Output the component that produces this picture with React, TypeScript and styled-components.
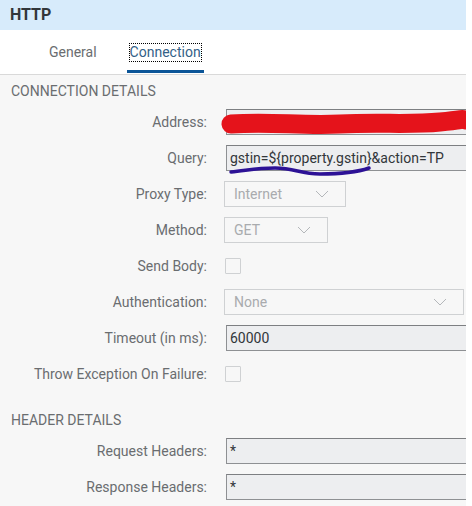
import styled, { createGlobalStyle } from 'styled-components';

const GlobalStyle = createGlobalStyle`
  html, body {
    margin: 0;
    padding: 0;
    background: #ffffff;
  }
  body {
    font-family: Roboto, 'Liberation Sans', sans-serif;
  }
`;

type Row =
  | { label: string; kind: 'input'; value: string }
  | { label: string; kind: 'select'; value: string; width: number }
  | { label: string; kind: 'check' };

const connectionRows: Row[] = [
  { label: 'Address', kind: 'input', value: '' },
  { label: 'Query', kind: 'input', value: 'gstin=${property.gstin}&action=TP' },
  { label: 'Proxy Type', kind: 'select', value: 'Internet', width: 122 },
  { label: 'Method', kind: 'select', value: 'GET', width: 104 },
  { label: 'Send Body', kind: 'check' },
  { label: 'Authentication', kind: 'select', value: 'None', width: 240 },
  { label: 'Timeout (in ms)', kind: 'input', value: '60000' },
  { label: 'Throw Exception On Failure', kind: 'check' },
];

const headerRows: Row[] = [
  { label: 'Request Headers', kind: 'input', value: '*' },
  { label: 'Response Headers', kind: 'input', value: '*' },
];

function Chevron() {
  return (
    <svg width="14" height="8" viewBox="0 0 14 8">
      <polyline points="1,1 7,7 13,1" fill="none" stroke="#b4b7ba" strokeWidth="1" />
    </svg>
  );
}

function FormRows({ rows }: { rows: Row[] }) {
  return (
    <Grid>
      {rows.map((row) => (
        <FieldRow key={row.label}>
          <Label>{row.label}:</Label>
          {row.kind === 'input' && <TextInput>{row.value}</TextInput>}
          {row.kind === 'select' && (
            <Select width={row.width}>
              <span>{row.value}</span>
              <Chevron />
            </Select>
          )}
          {row.kind === 'check' && <CheckBox />}
        </FieldRow>
      ))}
    </Grid>
  );
}

export default function App() {
  return (
    <>
      <GlobalStyle />
      <Panel>
        <TitleBar>HTTP</TitleBar>
        <TabBar>
          <Tab>General</Tab>
          <Tab active>
            <Focus>Connection</Focus>
          </Tab>
        </TabBar>
        <Content>
          <SectionTitle>CONNECTION DETAILS</SectionTitle>
          <FormRows rows={connectionRows} />
          <SectionTitle spaced>HEADER DETAILS</SectionTitle>
          <FormRows rows={headerRows} />
        </Content>
        <Scribbles width="472" height="506" viewBox="0 0 472 506">
          <path
            d="M231 124 C 270 121, 300 126, 340 124 S 410 125, 440 122 S 458 119, 466 120"
            fill="none"
            stroke="#e5131b"
            strokeWidth="19"
            strokeLinecap="round"
          />
          <path
            d="M231 172 C 245 171, 255 168, 275 168 S 300 174, 320 174 S 355 173, 369 168"
            fill="none"
            stroke="#2d1296"
            strokeWidth="3.5"
            strokeLinecap="round"
          />
        </Scribbles>
      </Panel>
    </>
  );
}

const Panel = styled.div`
  position: relative;
  width: 466px;
  height: 506px;
  overflow: hidden;
  background: #f7f7f7;
`;

const TitleBar = styled.div`
  height: 30px;
  line-height: 30px;
  padding-left: 10px;
  background: #d7ebfb;
  color: #32363a;
  font-size: 16px;
  font-weight: 700;
`;

const TabBar = styled.div`
  display: flex;
  align-items: flex-end;
  gap: 27px;
  height: 44px;
  padding-left: 46px;
  background: #ffffff;
  border-bottom: 1px solid #d9d9d9;
  box-sizing: content-box;
`;

const Tab = styled.div<{ active?: boolean }>`
  display: flex;
  align-items: center;
  box-sizing: border-box;
  height: 43px;
  margin-bottom: 1px;
  padding: 4px 3px 0;
  font-size: 14px;
  color: ${(p) => (p.active ? '#346187' : '#6a6d70')};
  border-bottom: 3px solid ${(p) => (p.active ? '#0b5598' : 'transparent')};
  border-radius: 2px 2px 0 0;
`;

const Focus = styled.span`
  outline: 1px dotted #000000;
  outline-offset: 0;
  line-height: 17px;
`;

const Content = styled.div`
  padding-top: 6px;
`;

const SectionTitle = styled.div<{ spaced?: boolean }>`
  height: 20px;
  line-height: 20px;
  padding-left: 11px;
  margin-top: ${(p) => (p.spaced ? '23px' : '0')};
  margin-bottom: 8px;
  color: #6a6d70;
  font-size: 14px;
`;

const Grid = styled.div`
  display: flex;
  flex-direction: column;
  gap: 10px;
`;

const FieldRow = styled.div`
  display: grid;
  grid-template-columns: 207px 1fr;
  column-gap: 17px;
  align-items: center;
  height: 26px;
`;

const Label = styled.div`
  text-align: right;
  color: #6a6d70;
  font-size: 14px;
  white-space: nowrap;
`;

const TextInput = styled.div`
  box-sizing: border-box;
  height: 26px;
  width: 260px;
  margin-left: 2px;
  padding: 0 3px;
  line-height: 24px;
  font-size: 14px;
  color: #32363a;
  background: #edeef0;
  border: 1px solid #8e9093;
  border-top-color: #7d7f82;
  white-space: nowrap;
  overflow: hidden;
`;

const Select = styled.div<{ width: number }>`
  box-sizing: border-box;
  display: flex;
  align-items: center;
  justify-content: space-between;
  width: ${(p) => p.width}px;
  height: 26px;
  padding: 0 16px 0 9px;
  font-size: 14px;
  color: #a9abae;
  background: #f7f7f7;
  border: 1px solid #cfd1d3;
`;

const CheckBox = styled.div`
  box-sizing: border-box;
  width: 16px;
  height: 16px;
  margin-left: 1px;
  background: #f7f7f7;
  border: 1px solid #cfd1d3;
  border-radius: 1px;
`;

const Scribbles = styled.svg`
  position: absolute;
  left: 0;
  top: 0;
  pointer-events: none;
`;
